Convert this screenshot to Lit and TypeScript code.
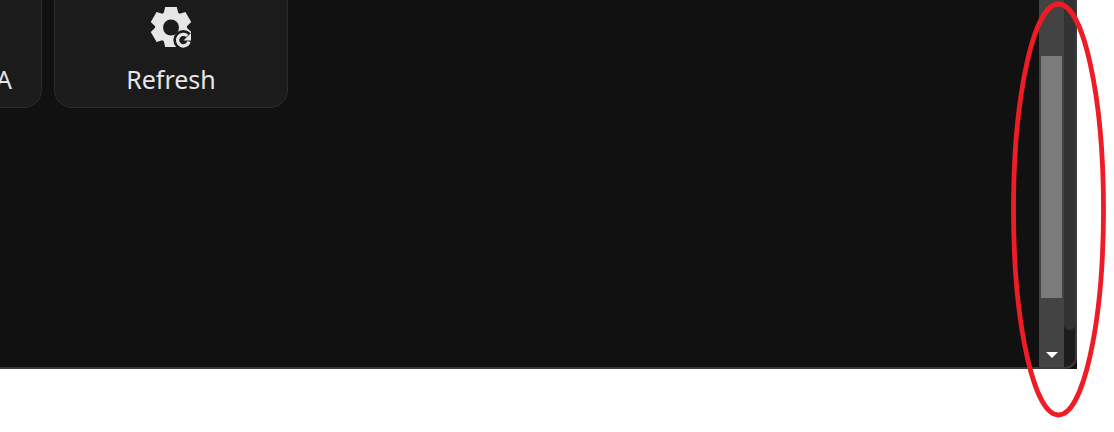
import { LitElement, html, css, svg } from "lit";
import { customElement } from "lit/decorators.js";

/** Six-toothed cog outline, computed around (cx, cy). */
function cogPath(cx: number, cy: number): string {
  const outer = 20;
  const root = 14.2;
  const tipHalf = 5.8;
  const rootHalf = 7.2;
  const pts: string[] = [];
  for (let k = 0; k < 6; k++) {
    const a = (Math.PI / 3) * k;
    const place = (x: number, y: number) =>
      `${(cx + x * Math.cos(a) - y * Math.sin(a)).toFixed(2)} ${(cy + x * Math.sin(a) + y * Math.cos(a)).toFixed(2)}`;
    pts.push(place(-rootHalf, -root), place(-tipHalf, -outer), place(tipHalf, -outer), place(rootHalf, -root));
  }
  return `M${pts.join("L")}Z`;
}

@customElement("app-root")
export class AppRoot extends LitElement {
  static styles = css`
    :host {
      display: block;
      width: 1114px;
      height: 432px;
      background: #fff;
      overflow: hidden;
      position: relative;
      font-family: "Noto Sans", "Open Sans", sans-serif;
    }
    .window {
      width: 1077px;
      height: 369px;
      background: #111111;
      display: flex;
    }
    .main {
      flex: 1;
      min-width: 0;
      overflow: hidden;
      border-bottom: 2px solid #3a3a3a;
    }
    .row {
      display: flex;
      gap: 12px;
      margin: -20px 0 0 -192px;
    }
    .tile {
      flex: none;
      width: 234px;
      height: 128px;
      box-sizing: border-box;
      padding-top: 24px;
      background: #1b1b1b;
      border: 1px solid #2d2d2d;
      border-radius: 18px;
      display: flex;
      flex-direction: column;
      align-items: center;
      color: #e6e6e6;
      font-size: 25px;
      line-height: 30px;
    }
    .tile.clipped {
      align-items: flex-end;
      padding-right: 29px;
    }
    .slot {
      width: 44px;
      height: 44px;
      flex: none;
      display: block;
    }
    .label {
      margin-top: 15px;
    }
    .track {
      flex: none;
      width: 38px;
      display: flex;
    }
    .bar {
      width: 25px;
      flex: none;
      background: #434343;
      border-bottom: 2px solid #3a3a3a;
      position: relative;
      display: flex;
      flex-direction: column;
      align-items: center;
      padding-top: 56px;
      box-sizing: border-box;
    }
    .thumb {
      width: 21px;
      height: 242px;
      background: #7b7b7b;
    }
    .arrow {
      position: absolute;
      left: 6.5px;
      bottom: 9px;
      width: 0;
      height: 0;
      border-left: 6px solid transparent;
      border-right: 6px solid transparent;
      border-top: 6px solid #fff;
    }
    .rail {
      flex: 1;
      background: #1c1c1c;
      border-right: 2px solid #3a3a3a;
      border-bottom: 2px solid #3a3a3a;
      border-bottom-right-radius: 12px;
    }
    .rail-top {
      height: 330px;
      background: #303233;
      border-bottom-left-radius: 8px;
      border-bottom-right-radius: 8px;
    }
    .ellipse {
      position: absolute;
      left: 0;
      top: 0;
      width: 1114px;
      height: 432px;
      pointer-events: none;
    }
  `;

  render() {
    return html`
      <div class="window">
        <div class="main">
          <div class="row">
            <div class="tile clipped">
              <div class="slot"></div>
              <div class="label">A</div>
            </div>
            <div class="tile">
              <svg class="slot" viewBox="0 0 44 44">
                <defs>
                  <mask id="cut">
                    <rect width="44" height="44" fill="#fff" />
                    <circle cx="22" cy="22.500" r="8" fill="#000" />
                    <circle cx="34.300" cy="35" r="10" fill="#000" />
                  </mask>
                </defs>
                <path d="${cogPath(22, 22)}" fill="#e6e6e6" mask="url(#cut)" />
                <path
                  d="M40 36.500a5.800 5.800 0 1 1-1.700-5.600"
                  fill="none"
                  stroke="#e6e6e6"
                  stroke-width="3.300"
                />
                <path d="M42 28v7.500h-7.500z" fill="#e6e6e6" />
              </svg>
              <div class="label">Refresh</div>
            </div>
          </div>
        </div>
        <div class="track">
          <div class="bar">
            <div class="thumb"></div>
            <div class="arrow"></div>
          </div>
          <div class="rail"><div class="rail-top"></div></div>
        </div>
      </div>
      ${svg`<svg class="ellipse" viewBox="0 0 1114 432"><ellipse cx="1058.500" cy="209.500" rx="45" ry="205.500" fill="none" stroke="#ee1c25" stroke-width="4.800"/></svg>`}
    `;
  }
}
